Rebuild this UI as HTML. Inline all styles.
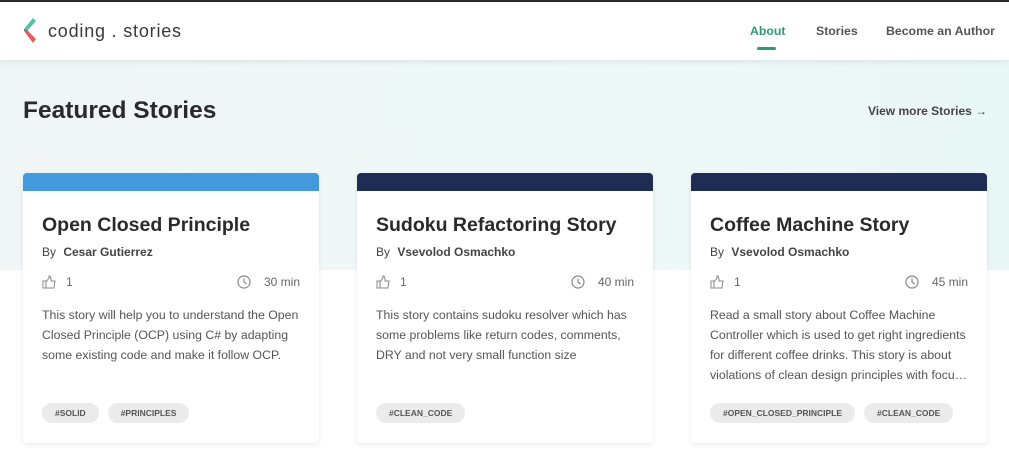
<!DOCTYPE html>
<html><head><meta charset="utf-8"><style>
*{box-sizing:border-box;margin:0;padding:0}
body{width:1009px;height:465px;overflow:hidden;font-family:"Liberation Sans",sans-serif;background:#fff;position:relative}
.top{position:absolute;left:0;top:0;width:1009px;height:2px;background:#2b2b2b}
.hdr{position:absolute;left:0;top:2px;width:1009px;height:58px;background:#fff;box-shadow:0 2px 6px rgba(0,0,0,.08);z-index:2}
.bg{position:absolute;left:0;top:60px;width:1009px;height:210px;background:linear-gradient(90deg,#f0f6f6,#eef8f8 60%,#eaf7f7)}
.logo{position:absolute;left:48px;top:19px;font-size:18px;color:#3a3a3a;letter-spacing:.8px}
.nav{position:absolute;top:22px;font-size:12.3px;font-weight:bold;color:#555}
h1{position:absolute;left:23px;top:97px;font-size:24.5px;color:#2a2a2a}
.more{position:absolute;left:868px;top:104px;font-size:12px;font-weight:bold;color:#444}
.card{position:absolute;top:173px;width:296px;height:270px;background:#fff;border-radius:4px;box-shadow:0 2px 6px rgba(0,0,0,.08);overflow:hidden}
.bar{height:18px}
.t{position:absolute;left:19px;top:41px;font-size:19.5px;font-weight:bold;color:#2a2a2a}
.by{position:absolute;left:19px;top:72px;font-size:12px;color:#444}
.by b{margin-left:4px}
.meta{position:absolute;left:19px;right:19px;top:102px;font-size:12px;color:#666;height:16px}
.meta svg{vertical-align:-3px;margin-right:10px}
.d{position:absolute;left:19px;right:16px;top:132px;font-size:12.3px;line-height:20px;color:#555}
.tags{position:absolute;left:19px;top:230px}
.tag{display:inline-block;background:#ebebeb;border-radius:10px;font-size:8.5px;font-weight:bold;color:#555;padding:5px 13px;margin-right:9px}
</style></head><body>
<div class="top"></div>
<div class="bg"></div>
<div class="hdr">
<svg style="position:absolute;left:21px;top:15px" width="16" height="28" viewBox="0 0 16 28"><polygon points="12,1 15,4 7,13 3,12" fill="#5bbfa7"/><polygon points="3,14 7,14 15,22 12,26" fill="#e06060"/><polygon points="3,12 7,13 7,14 3,14" fill="#777"/></svg>
<div class="logo">coding . stories</div>
<div class="nav" style="left:750px;color:#2e9a7a">About</div>
<div style="position:absolute;left:757px;top:45px;width:19px;height:3px;background:#2e9a7a;border-radius:2px"></div>
<div class="nav" style="left:816px">Stories</div>
<div class="nav" style="left:886px">Become an Author</div>
</div>
<h1>Featured Stories</h1>
<div class="more">View more Stories &#8594;</div>

<div class="card" style="left:23px"><div class="bar" style="background:#4399dc"></div>
<div class="t">Open Closed Principle</div><div class="by">By <b>Cesar Gutierrez</b></div>
<div class="meta"><svg width="14" height="14" viewBox="0 0 14 14" fill="none" stroke="#888" stroke-width="1"><rect x="1" y="6" width="3" height="7"/><path d="M4 7 L7 3 V1 H8 L9 4 V6 H13 L12 13 H4"/></svg>1<span style="float:right"><svg width="14" height="14" viewBox="0 0 14 14" fill="none" stroke="#888" stroke-width="1.2"><circle cx="7" cy="7" r="6"/><path d="M7 3.5V7L9.5 9"/></svg>&nbsp;30 min</span></div>
<div class="d">This story will help you to understand the Open Closed Principle (OCP) using C# by adapting some existing code and make it follow OCP.</div>
<div class="tags"><span class="tag">#SOLID</span><span class="tag">#PRINCIPLES</span></div></div>

<div class="card" style="left:357px"><div class="bar" style="background:#1f2d55"></div>
<div class="t">Sudoku Refactoring Story</div><div class="by">By <b>Vsevolod Osmachko</b></div>
<div class="meta"><svg width="14" height="14" viewBox="0 0 14 14" fill="none" stroke="#888" stroke-width="1"><rect x="1" y="6" width="3" height="7"/><path d="M4 7 L7 3 V1 H8 L9 4 V6 H13 L12 13 H4"/></svg>1<span style="float:right"><svg width="14" height="14" viewBox="0 0 14 14" fill="none" stroke="#888" stroke-width="1.2"><circle cx="7" cy="7" r="6"/><path d="M7 3.5V7L9.5 9"/></svg>&nbsp;40 min</span></div>
<div class="d">This story contains sudoku resolver which has some problems like return codes, comments, DRY and not very small function size</div>
<div class="tags"><span class="tag">#CLEAN_CODE</span></div></div>

<div class="card" style="left:691px"><div class="bar" style="background:#1f2d55"></div>
<div class="t">Coffee Machine Story</div><div class="by">By <b>Vsevolod Osmachko</b></div>
<div class="meta"><svg width="14" height="14" viewBox="0 0 14 14" fill="none" stroke="#888" stroke-width="1"><rect x="1" y="6" width="3" height="7"/><path d="M4 7 L7 3 V1 H8 L9 4 V6 H13 L12 13 H4"/></svg>1<span style="float:right"><svg width="14" height="14" viewBox="0 0 14 14" fill="none" stroke="#888" stroke-width="1.2"><circle cx="7" cy="7" r="6"/><path d="M7 3.5V7L9.5 9"/></svg>&nbsp;45 min</span></div>
<div class="d" style="height:80px;overflow:hidden">Read a small story about Coffee Machine Controller which is used to get right ingredients for different coffee drinks. This story is about violations of clean design principles with focu…</div>
<div class="tags"><span class="tag">#OPEN_CLOSED_PRINCIPLE</span><span class="tag">#CLEAN_CODE</span></div></div>
</body></html>
